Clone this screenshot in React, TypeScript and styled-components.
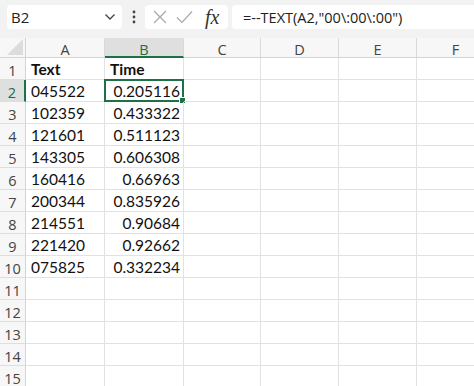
import React from "react";
import styled, { createGlobalStyle } from "styled-components";

const Global = createGlobalStyle`
  html, body { margin: 0; padding: 0; background: #ffffff; }
  body { width: 474px; height: 386px; overflow: hidden; }
`;

const Page = styled.div`
  width: 474px;
  height: 386px;
  display: flex;
  flex-direction: column;
  overflow: hidden;
  background: #fff;
`;

const Toolbar = styled.div`
  height: 38px;
  flex-shrink: 0;
  box-sizing: border-box;
  background: #f2f2f2;
  display: flex;
  align-items: flex-start;
  padding: 5px 0 0 7px;
`;

const NameBox = styled.div`
  width: 115px;
  height: 24px;
  background: #fff;
  border-radius: 4px;
  display: flex;
  align-items: center;
  justify-content: space-between;
  padding: 0 6px 0 4px;
  box-sizing: border-box;
  font-family: "Open Sans", sans-serif;
  font-size: 15px;
  color: #222;
`;

const Dots = styled.div`
  width: 23px;
  height: 24px;
  display: flex;
  align-items: center;
  justify-content: center;
`;

const FxBox = styled.div`
  width: 83px;
  height: 24px;
  background: #fff;
  border-radius: 4px;
  display: flex;
  align-items: center;
  box-sizing: border-box;
  padding: 0 0 0 8px;
  gap: 9px;
  margin-right: 4px;
`;

const Fx = styled.span`
  font-family: "Liberation Serif", serif;
  font-style: italic;
  font-size: 20px;
  color: #333;
  margin-left: 3px;
  line-height: 20px;
`;

const FormulaBox = styled.div`
  flex: 1;
  height: 24px;
  background: #fff;
  border-radius: 4px 0 0 4px;
  display: flex;
  align-items: center;
  padding-left: 11px;
  font-family: "Open Sans", sans-serif;
  font-size: 14.5px;
  color: #222;
  white-space: nowrap;
`;

const COLS = [26, 79, 79, 77, 78, 78, 78];

const Grid = styled.div`
  display: grid;
  grid-template-columns: ${COLS.map((c) => c + "px").join(" ")};
  grid-template-rows: 20px repeat(15, 22px);
`;

const Corner = styled.div`
  background: #f7f7f7;
  border-right: 1px solid #d4d4d4;
  border-bottom: 1px solid #d4d4d4;
  position: relative;
  overflow: hidden;
`;

const Triangle = styled.div`
  position: absolute;
  right: 2px;
  bottom: 2px;
  width: 0;
  height: 0;
  border-left: 16px solid transparent;
  border-bottom: 16px solid #dcdcdc;
`;

const ColHead = styled.div<{ $sel?: boolean }>`
  background: ${(p) => (p.$sel ? "#dfdfdf" : "#f7f7f7")};
  border-right: 1px solid #d9d9d9;
  border-bottom: ${(p) => (p.$sel ? "2px solid #1e7145" : "1px solid #d4d4d4")};
  display: flex;
  align-items: center;
  justify-content: center;
  font-family: "Open Sans", sans-serif;
  font-size: 14.5px;
  color: ${(p) => (p.$sel ? "#1e6e42" : "#444")};
  box-sizing: border-box;
  padding-top: 4px;
`;

const RowHead = styled.div<{ $sel?: boolean }>`
  background: ${(p) => (p.$sel ? "#dfdfdf" : "#f7f7f7")};
  border-right: ${(p) => (p.$sel ? "2px solid #1e7145" : "1px solid #d4d4d4")};
  border-bottom: 1px solid #dedede;
  display: flex;
  align-items: center;
  justify-content: center;
  padding-top: 3px;
  font-family: "Open Sans", sans-serif;
  font-size: 14.5px;
  color: ${(p) => (p.$sel ? "#1e6e42" : "#444")};
  box-sizing: border-box;
`;

const Cell = styled.div<{ $right?: boolean; $bold?: boolean }>`
  border-right: 1px solid #e2e2e2;
  border-bottom: 1px solid #e2e2e2;
  box-sizing: border-box;
  display: flex;
  align-items: flex-end;
  justify-content: ${(p) => (p.$right ? "flex-end" : "flex-start")};
  padding: 0 3px 0 5px;
  font-family: "Lato", sans-serif;
  font-size: 15.5px;
  line-height: 19px;
  font-weight: ${(p) => (p.$bold ? 700 : 400)};
  color: #111;
  white-space: nowrap;
  position: relative;
`;

const Selected = styled.div`
  position: absolute;
  left: -1px;
  top: -1px;
  right: -1px;
  bottom: -1px;
  border: 2px solid #1e7145;
  pointer-events: none;
`;

const Handle = styled.div`
  position: absolute;
  right: -4px;
  bottom: -4px;
  width: 5px;
  height: 5px;
  background: #1e7145;
  border: 1px solid #fff;
`;

const data: [string, string][] = [
  ["045522", "0.205116"],
  ["102359", "0.433322"],
  ["121601", "0.511123"],
  ["143305", "0.606308"],
  ["160416", "0.66963"],
  ["200344", "0.835926"],
  ["214551", "0.90684"],
  ["221420", "0.92662"],
  ["075825", "0.332234"],
];

const Chevron = () => (
  <svg width="12" height="8" viewBox="0 0 12 8">
    <path d="M1.5 1.5 L6 6 L10.5 1.5" fill="none" stroke="#444" strokeWidth="1.3" />
  </svg>
);

const VDots = () => (
  <svg width="4" height="14" viewBox="0 0 4 14">
    <circle cx="2" cy="2" r="1.4" fill="#444" />
    <circle cx="2" cy="7" r="1.4" fill="#444" />
    <circle cx="2" cy="12" r="1.4" fill="#444" />
  </svg>
);

const Cross = () => (
  <svg width="14" height="14" viewBox="0 0 14 14">
    <path d="M1 1 L13 13 M13 1 L1 13" stroke="#a8a8a8" strokeWidth="1.2" fill="none" />
  </svg>
);

const Check = () => (
  <svg width="17" height="14" viewBox="0 0 17 14">
    <path d="M1 7.5 L6 12.5 L16 1.5" stroke="#a8a8a8" strokeWidth="1.2" fill="none" />
  </svg>
);

export default function App() {
  const letters = ["A", "B", "C", "D", "E", "F"];
  const rows: React.ReactNode[] = [];
  for (let r = 1; r <= 15; r++) {
    rows.push(
      <RowHead key={`h${r}`} $sel={r === 2}>
        {r}
      </RowHead>
    );
    for (let c = 0; c < 6; c++) {
      let content: React.ReactNode = null;
      let right = false;
      let bold = false;
      if (r === 1 && c === 0) {
        content = "Text";
        bold = true;
      } else if (r === 1 && c === 1) {
        content = "Time";
        bold = true;
      } else if (r >= 2 && r <= 10 && c < 2) {
        content = data[r - 2][c];
        right = c === 1;
      }
      rows.push(
        <Cell key={`${r}-${c}`} $right={right} $bold={bold}>
          {content}
          {r === 2 && c === 1 && (
            <Selected>
              <Handle />
            </Selected>
          )}
        </Cell>
      );
    }
  }
  return (
    <Page>
      <Global />
      <Toolbar>
        <NameBox>
          <span>B2</span>
          <Chevron />
        </NameBox>
        <Dots>
          <VDots />
        </Dots>
        <FxBox>
          <Cross />
          <Check />
          <Fx>fx</Fx>
        </FxBox>
        <FormulaBox>=--TEXT(A2,"00\:00\:00")</FormulaBox>
      </Toolbar>
      <Grid>
        <Corner>
          <Triangle />
        </Corner>
        {letters.map((l) => (
          <ColHead key={l} $sel={l === "B"}>
            {l}
          </ColHead>
        ))}
        {rows}
      </Grid>
    </Page>
  );
}
